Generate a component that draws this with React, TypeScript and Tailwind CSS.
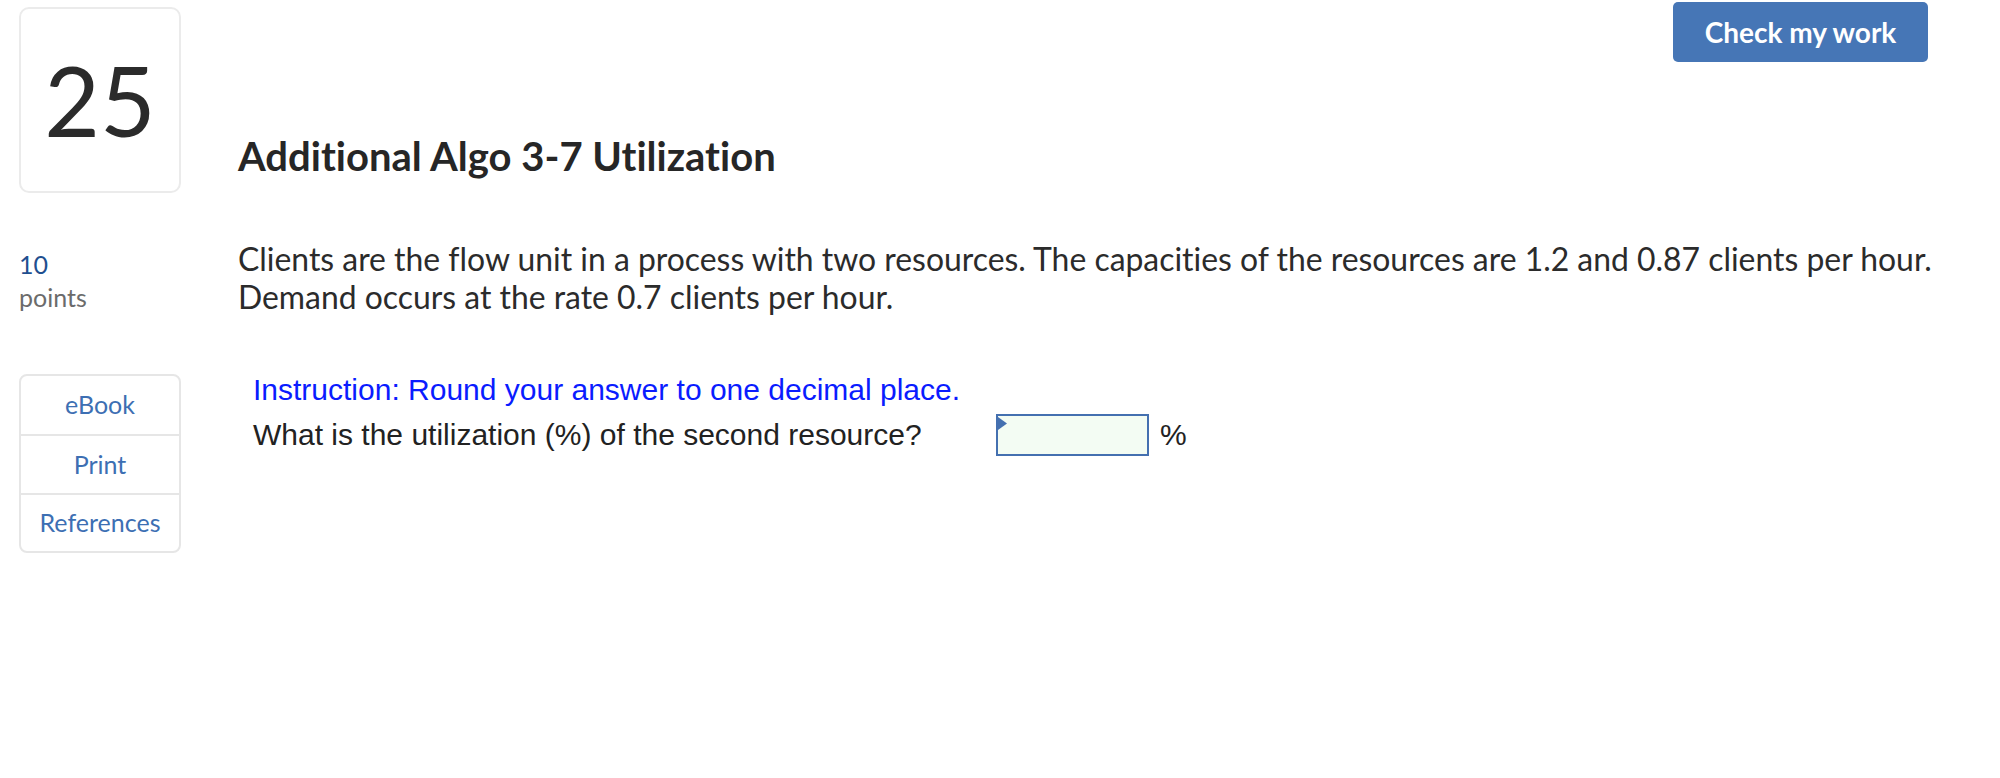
import { ReactNode } from "react";

const sideLinks = [
  { label: "eBook", h: "h-[60px]" },
  { label: "Print", h: "h-[59px]" },
  { label: "References", h: "h-[56px]" },
];

function SideLink({ children, height, last }: { children: ReactNode; height: string; last?: boolean }) {
  return (
    <div
      className={`flex items-center justify-center text-[25px] text-[#3d6fb3] ${height} ${
        last ? "" : "border-b-2 border-[#e6e6e6]"
      }`}
    >
      {children}
    </div>
  );
}

export default function App() {
  return (
    <div className="flex min-h-[778px] bg-white px-[19px] font-['Lato',sans-serif] text-[#2b2b2b] [font-variant-ligatures:none]">
      {/* left rail */}
      <div className="w-[162px] shrink-0">
        <div className="mt-[7px] flex h-[186px] items-center justify-center rounded-[10px] border-2 border-[#ebebeb]">
          <span className="text-[96px] leading-none">25</span>
        </div>

        <div className="mt-[55px] leading-[33px]">
          <div className="text-[25px] text-[#1f4f8f]">10</div>
          <div className="text-[25px] text-[#6b6b6b]">points</div>
        </div>

        <div className="mt-[60px] overflow-hidden rounded-[8px] border-2 border-[#e6e6e6]">
          {sideLinks.map((link, i) => (
            <SideLink key={link.label} height={link.h} last={i === sideLinks.length - 1}>
              {link.label}
            </SideLink>
          ))}
        </div>
      </div>

      {/* question */}
      <div className="ml-[57px] flex-1">
        <div className="flex justify-end pr-[53px]">
          <button className="mt-[2px] h-[60px] w-[255px] rounded-[5px] bg-[#4676b6] text-[28px] font-bold text-white">
            Check my work
          </button>
        </div>

        <h1 className="mt-[70px] text-[40px] font-bold leading-[48px] text-[#262626]">
          Additional Algo 3-7 Utilization
        </h1>

        <p className="mt-[60px] text-[31.9px] leading-[38px]">
          Clients are the flow unit in a process with two resources. The capacities of the resources are 1.2 and 0.87
          clients per hour.
          <br />
          Demand occurs at the rate 0.7 clients per hour.
        </p>

        <div className="mt-[51px] pl-[15px] font-['Liberation_Sans',Arial,sans-serif] text-[30px] leading-[45px]">
          <div className="text-[#0a1cff]">Instruction: Round your answer to one decimal place.</div>
          <div className="flex items-center text-[#222222]">
            <span className="w-[743px]">What is the utilization (%) of the second resource?</span>
            <div className="relative h-[42px] w-[153px] border-2 border-[#4470b0] bg-[#f3fcf3]">
              <svg className="absolute left-0 top-[1px]" width="10" height="13" viewBox="0 0 10 13">
                <path d="M0 0 L9 6.5 L0 13 Z" fill="#4470b0" />
              </svg>
            </div>
            <span className="ml-[11px]">%</span>
          </div>
        </div>
      </div>
    </div>
  );
}
